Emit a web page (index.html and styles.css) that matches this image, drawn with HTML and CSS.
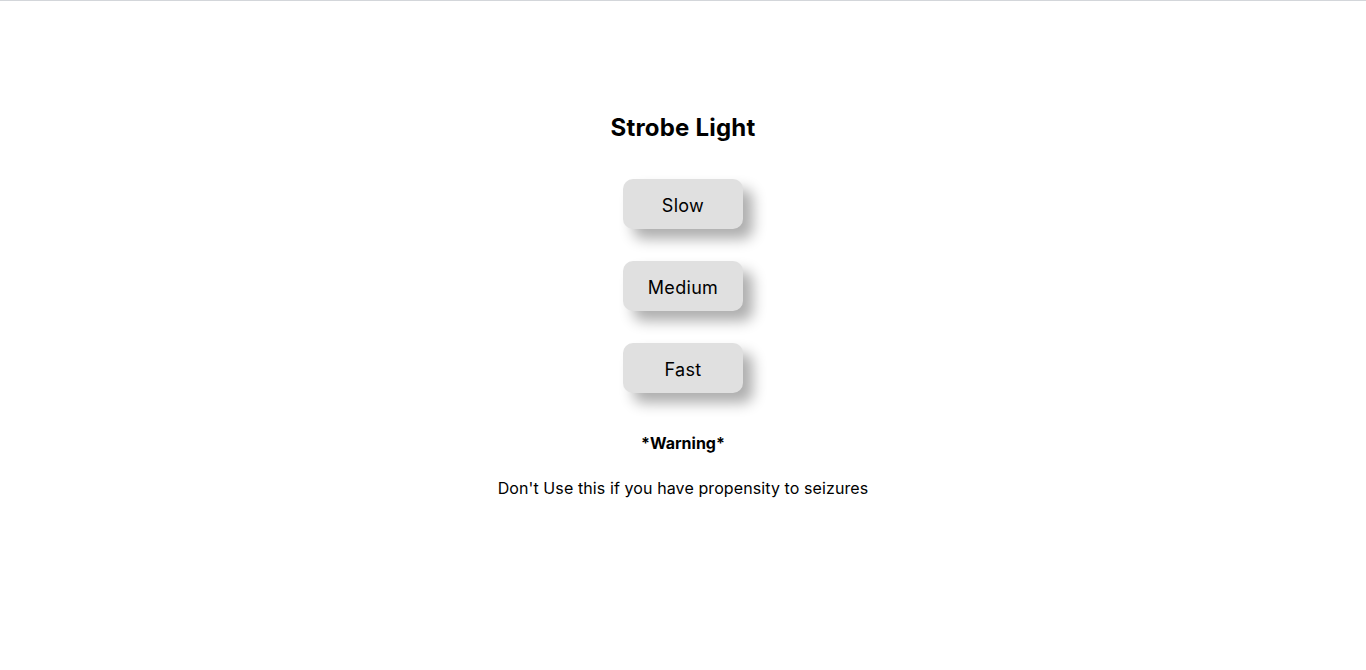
FILE: index.html
```html
<!DOCTYPE html>
<html>
<head>
<meta charset="utf-8">
<link rel="stylesheet" href="styles.css">
</head>
<body>
<main class="page">
  <h1 class="title">Strobe Light</h1>
  <div class="buttons">
    <button class="btn">Slow</button>
    <button class="btn">Medium</button>
    <button class="btn">Fast</button>
  </div>
  <p class="warning">*Warning*</p>
  <p class="note">Don't Use this if you have propensity to seizures</p>
</main>
</body>
</html>
```
FILE: styles.css
```css
html, body {
  margin: 0;
  padding: 0;
  background: #ffffff;
}
body {
  font-family: Inter, "Liberation Sans", sans-serif;
  color: #000;
  border-top: 1px solid #d3d6da;
  height: 669px;
  box-sizing: border-box;
  overflow: hidden;
}
.page {
  display: flex;
  flex-direction: column;
  align-items: center;
  padding-top: 112px;
}
.title {
  margin: 0;
  font-size: 24px;
  font-weight: 700;
  line-height: 30px;
  letter-spacing: 0.2px;
}
.buttons {
  display: flex;
  flex-direction: column;
  gap: 32px;
  margin-top: 36px;
}
.btn {
  width: 120px;
  height: 50px;
  padding: 2px 0 0;
  border: none;
  border-radius: 10px;
  background: #e0e0e0;
  font-family: inherit;
  font-size: 18px;
  letter-spacing: 0.3px;
  color: #000;
  box-shadow: 10px 10px 14px rgba(0,0,0,0.32);
}
.warning {
  margin: 40px 0 0;
  font-weight: 700;
  font-size: 16px;
  line-height: 20px;
}
.note {
  margin: 25px 0 0;
  font-size: 16px;
  line-height: 20px;
  letter-spacing: 0.1px;
}
```
